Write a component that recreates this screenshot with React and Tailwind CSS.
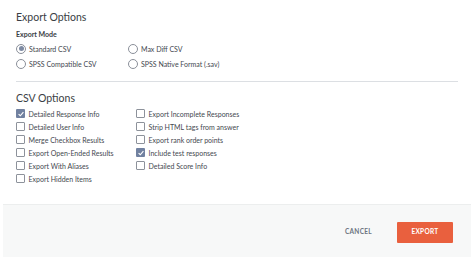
import React from "react";

function Radio({ checked, label }) {
  return (
    <div className="flex items-center gap-[3px] h-[15px]">
      <span className="w-[10px] h-[10px] rounded-full border border-[#8a8f99] bg-white flex items-center justify-center shrink-0">
        {checked && <span className="w-[5px] h-[5px] rounded-full bg-[#7d8aa3]" />}
      </span>
      <span>{label}</span>
    </div>
  );
}

function Check({ checked, label }) {
  return (
    <div className="flex items-center gap-[3.5px] h-[13px]">
      {checked ? (
        <span className="w-[9px] h-[9px] rounded-[1px] bg-[#7181a0] flex items-center justify-center shrink-0">
          <svg viewBox="0 0 10 10" className="w-[8px] h-[8px]">
            <path d="M2 5.2 L4.1 7.2 L8 2.6" fill="none" stroke="white" strokeWidth="1.4" />
          </svg>
        </span>
      ) : (
        <span className="w-[9px] h-[9px] rounded-[1px] border border-[#8d929b] bg-white shrink-0" />
      )}
      <span>{label}</span>
    </div>
  );
}

export default function App() {
  return (
    <div
      className="w-[474px] h-[261px] bg-white text-[#44484f] overflow-hidden flex flex-col"
      style={{ fontFamily: "Lato, 'Open Sans', sans-serif" }}
    >
      <div className="px-[16px] pt-[10px] h-[204px]">
        <div className="text-[10.5px] leading-[14px] text-[#3a3e44]">Export Options</div>
        <div className="mt-[5px] text-[7px] leading-[10px] font-bold text-[#3a3e44]">Export Mode</div>
        <div className="mt-[2px] grid grid-cols-[112px_1fr] text-[7px] leading-[10px]">
          <Radio checked label="Standard CSV" />
          <Radio label="Max Diff CSV" />
          <Radio label="SPSS Compatible CSV" />
          <Radio label="SPSS Native Format (.sav)" />
        </div>
        <div className="mt-[10px] border-t border-[#dcdfe3]" />
        <div className="mt-[9px] text-[10.5px] leading-[14px] text-[#3a3e44]">CSV Options</div>
        <div className="mt-[2px] grid grid-cols-[120px_1fr] text-[7px] leading-[10px]">
          <div className="flex flex-col">
            <Check checked label="Detailed Response Info" />
            <Check label="Detailed User Info" />
            <Check label="Merge Checkbox Results" />
            <Check label="Export Open-Ended Results" />
            <Check label="Export With Aliases" />
            <Check label="Export Hidden Items" />
          </div>
          <div className="flex flex-col">
            <Check label="Export Incomplete Responses" />
            <Check label="Strip HTML tags from answer" />
            <Check label="Export rank order points" />
            <Check checked label="Include test responses" />
            <Check label="Detailed Score Info" />
          </div>
        </div>
      </div>
      <div className="mx-[3px] h-[53px] bg-[#f7f8f8] border-t border-[#eceeee] flex items-center justify-end pr-[18px] gap-[25px] pt-[2px]">
        <span className="text-[6.5px] font-bold tracking-[0.3px] text-[#6c7480]">CANCEL</span>
        <button className="w-[56px] h-[21px] bg-[#e9603e] text-white text-[6.5px] font-bold tracking-[0.3px] rounded-[1px]">
          EXPORT
        </button>
      </div>
    </div>
  );
}
